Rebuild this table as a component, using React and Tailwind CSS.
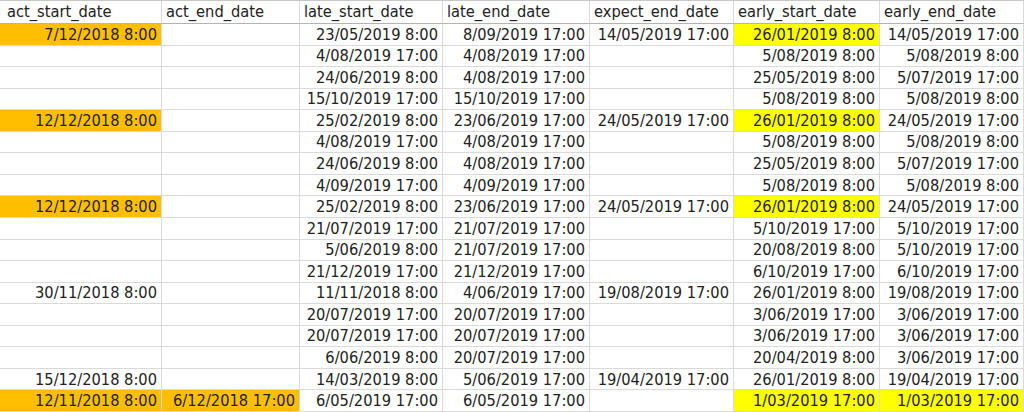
import React from 'react'

const headers = [
  'act_start_date',
  'act_end_date',
  'late_start_date',
  'late_end_date',
  'expect_end_date',
  'early_start_date',
  'early_end_date',
]

// o = orange fill, y = yellow fill
const rows = [
  [['7/12/2018 8:00', 'o'], '', '23/05/2019 8:00', '8/09/2019 17:00', '14/05/2019 17:00', ['26/01/2019 8:00', 'y'], '14/05/2019 17:00'],
  ['', '', '4/08/2019 17:00', '4/08/2019 17:00', '', '5/08/2019 8:00', '5/08/2019 8:00'],
  ['', '', '24/06/2019 8:00', '4/08/2019 17:00', '', '25/05/2019 8:00', '5/07/2019 17:00'],
  ['', '', '15/10/2019 17:00', '15/10/2019 17:00', '', '5/08/2019 8:00', '5/08/2019 8:00'],
  [['12/12/2018 8:00', 'o'], '', '25/02/2019 8:00', '23/06/2019 17:00', '24/05/2019 17:00', ['26/01/2019 8:00', 'y'], '24/05/2019 17:00'],
  ['', '', '4/08/2019 17:00', '4/08/2019 17:00', '', '5/08/2019 8:00', '5/08/2019 8:00'],
  ['', '', '24/06/2019 8:00', '4/08/2019 17:00', '', '25/05/2019 8:00', '5/07/2019 17:00'],
  ['', '', '4/09/2019 17:00', '4/09/2019 17:00', '', '5/08/2019 8:00', '5/08/2019 8:00'],
  [['12/12/2018 8:00', 'o'], '', '25/02/2019 8:00', '23/06/2019 17:00', '24/05/2019 17:00', ['26/01/2019 8:00', 'y'], '24/05/2019 17:00'],
  ['', '', '21/07/2019 17:00', '21/07/2019 17:00', '', '5/10/2019 17:00', '5/10/2019 17:00'],
  ['', '', '5/06/2019 8:00', '21/07/2019 17:00', '', '20/08/2019 8:00', '5/10/2019 17:00'],
  ['', '', '21/12/2019 17:00', '21/12/2019 17:00', '', '6/10/2019 17:00', '6/10/2019 17:00'],
  ['30/11/2018 8:00', '', '11/11/2018 8:00', '4/06/2019 17:00', '19/08/2019 17:00', '26/01/2019 8:00', '19/08/2019 17:00'],
  ['', '', '20/07/2019 17:00', '20/07/2019 17:00', '', '3/06/2019 17:00', '3/06/2019 17:00'],
  ['', '', '20/07/2019 17:00', '20/07/2019 17:00', '', '3/06/2019 17:00', '3/06/2019 17:00'],
  ['', '', '6/06/2019 8:00', '20/07/2019 17:00', '', '20/04/2019 8:00', '3/06/2019 17:00'],
  ['15/12/2018 8:00', '', '14/03/2019 8:00', '5/06/2019 17:00', '19/04/2019 17:00', '26/01/2019 8:00', '19/04/2019 17:00'],
  [['12/11/2018 8:00', 'o'], ['6/12/2018 17:00', 'o'], '6/05/2019 17:00', '6/05/2019 17:00', '', ['1/03/2019 17:00', 'y'], ['1/03/2019 17:00', 'y']],
]

function Cell({ value }) {
  const [text, fill] = Array.isArray(value) ? value : [value, null]
  const bg = fill === 'o' ? 'bg-[#ffbf00]' : fill === 'y' ? 'bg-[#ffff00]' : 'bg-white'
  return (
    <div className={`${bg} flex items-center justify-end pr-[4px] pt-[1px] border-r border-b border-[#dadada] whitespace-nowrap overflow-hidden`}>
      {text}
    </div>
  )
}

export default function App() {
  return (
    <div
      className="w-[1024px] h-[412px] overflow-hidden bg-white text-[#222] text-[16.3px] leading-none"
      style={{ fontFamily: '"DejaVu Sans Condensed", "Liberation Sans", sans-serif' }}
    >
      <div className="grid h-[412px] grid-cols-[162px_138px_143px_147px_144px_146px_144px] grid-rows-[23px_repeat(18,1fr)] border-t border-[#c8c8c8]">
        {headers.map((h, i) => (
          <div
            key={h}
            className={`flex items-center border-r border-b border-r-[#dadada] border-b-[#b4b4b4] whitespace-nowrap ${i === 0 ? 'pl-[7px]' : 'pl-[4px]'}`}
          >
            {h}
          </div>
        ))}
        {rows.map((row, r) => row.map((v, c) => <Cell key={`${r}-${c}`} value={v} />))}
      </div>
    </div>
  )
}
